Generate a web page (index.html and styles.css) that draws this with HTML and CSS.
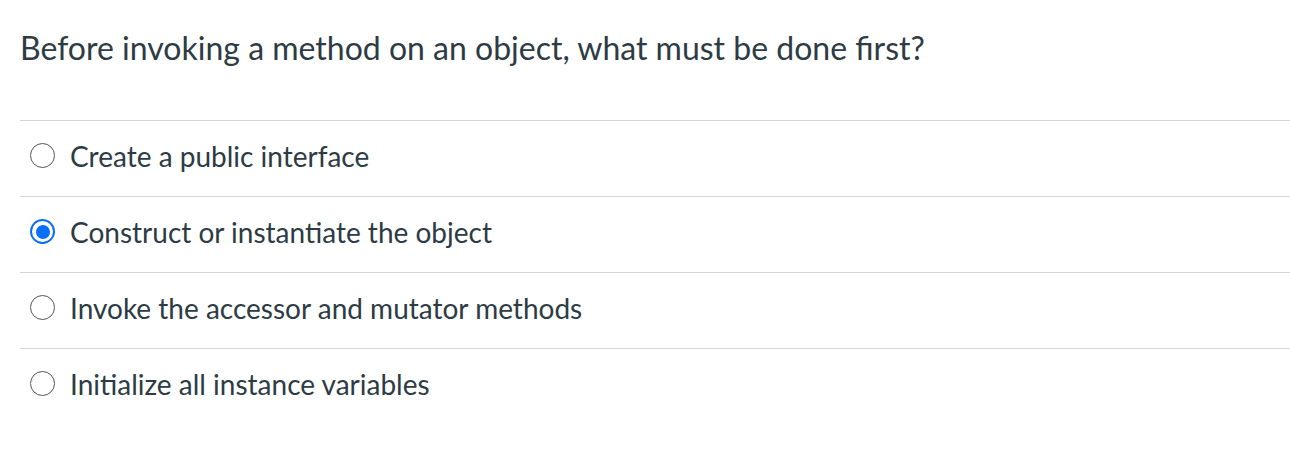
FILE: index.html
```html
<!DOCTYPE html>
<html>
<head>
<meta charset="utf-8">
<link rel="stylesheet" href="styles.css">
</head>
<body>
<div class="quiz">
  <div class="question">Before invoking a method on an object, what must be done first?</div>
  <div class="answers">
    <label class="answer"><span class="radio"></span><span class="text">Create a public interface</span></label>
    <label class="answer"><span class="radio checked"></span><span class="text">Construct or instantiate the object</span></label>
    <label class="answer"><span class="radio"></span><span class="text">Invoke the accessor and mutator methods</span></label>
    <label class="answer"><span class="radio"></span><span class="text">Initialize all instance variables</span></label>
  </div>
</div>
</body>
</html>
```
FILE: styles.css
```css
html, body {
  margin: 0;
  padding: 0;
  background: #fff;
}
body {
  font-family: Lato, "Open Sans", sans-serif;
  color: #2d3b45;
}
.quiz {
  padding-left: 20px;
}
.question {
  height: 120px;
  box-sizing: border-box;
  padding-top: 28px;
  font-size: 32px;
  line-height: 40px;
}
.answer {
  display: flex;
  align-items: center;
  height: 76px;
  box-sizing: border-box;
  border-top: 1px solid #d6d6d6;
  padding-left: 10px;
  padding-bottom: 6px;
  gap: 15px;
}
.text {
  font-size: 28px;
  line-height: 34px;
}
.radio {
  width: 25px;
  height: 25px;
  box-sizing: border-box;
  border-radius: 50%;
  border: 1.5px solid #555;
  flex: none;
  position: relative;
}
.radio.checked {
  border: 2px solid #0a6ff8;
}
.radio.checked::after {
  content: "";
  position: absolute;
  left: 3.5px;
  top: 3.5px;
  width: 14px;
  height: 14px;
  border-radius: 50%;
  background: #0a6ff8;
}
```
